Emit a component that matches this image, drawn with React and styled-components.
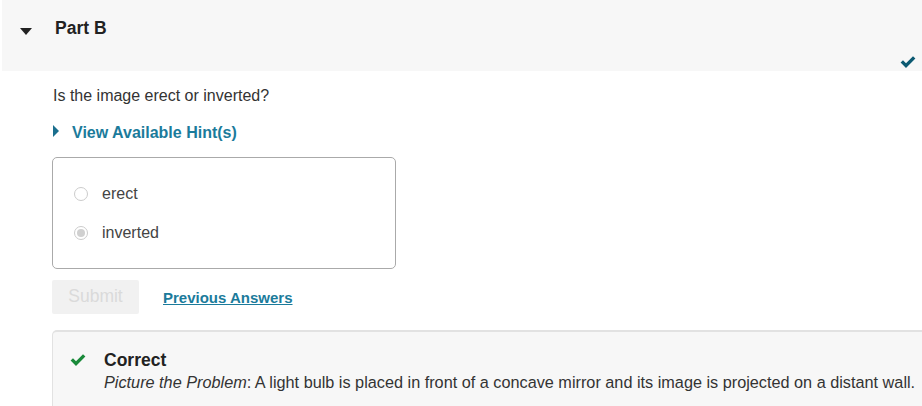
import React from "react";
import styled, { createGlobalStyle } from "styled-components";

const GlobalStyle = createGlobalStyle`
  html, body {
    margin: 0;
    padding: 0;
    background: #fff;
    font-family: "Liberation Sans", Arial, sans-serif;
    overflow: hidden;
  }
`;

const Page = styled.div`
  width: 922px;
  height: 406px;
  overflow: hidden;
`;

const Header = styled.div`
  position: relative;
  margin-left: 2px;
  height: 71px;
  background: #f7f7f7;
  display: flex;
  align-items: flex-start;
  padding-top: 18px;
  box-sizing: border-box;
`;

const Caret = styled.span`
  width: 0;
  height: 0;
  margin: 10px 0 0 18px;
  border-left: 6px solid transparent;
  border-right: 6px solid transparent;
  border-top: 7px solid #222;
`;

const PartTitle = styled.h2`
  margin: 0 0 0 23px;
  font-size: 17.5px;
  font-weight: bold;
  color: #222;
  line-height: 20px;
`;

const CheckIcon = styled.svg`
  flex: none;
  display: block;
`;

const DoneCheck = styled(CheckIcon)`
  position: absolute;
  right: 6px;
  bottom: 2px;
`;

const Body = styled.div`
  padding-left: 53px;
  display: flex;
  flex-direction: column;
`;

const Question = styled.p`
  margin: 16px 0 0;
  font-size: 16px;
  line-height: 18px;
  color: #333;
`;

const HintToggle = styled.a`
  display: flex;
  align-items: center;
  margin-top: 19px;
  font-size: 16px;
  font-weight: bold;
  line-height: 18px;
  color: #1b7b9b;
  cursor: pointer;
`;

const HintArrow = styled.span`
  width: 0;
  height: 0;
  margin-top: -5px;
  margin-right: 13px;
  border-top: 6.5px solid transparent;
  border-bottom: 6.5px solid transparent;
  border-left: 6px solid #1b6f8e;
`;

const Choices = styled.div`
  margin: 15px 0 0 -1px;
  width: 344px;
  height: 112px;
  box-sizing: border-box;
  border: 1px solid #aaa;
  border-radius: 5px;
  display: flex;
  flex-direction: column;
  padding: 27px 0 0 21px;
  gap: 21px;
`;

const Choice = styled.label`
  display: flex;
  align-items: center;
  font-size: 16px;
  line-height: 18px;
  color: #444;
`;

const Radio = styled.span`
  width: 14px;
  height: 14px;
  box-sizing: border-box;
  border-radius: 50%;
  border: 1px solid #ccc;
  background: #fff;
  margin-right: 14px;
  display: flex;
  align-items: center;
  justify-content: center;
  &::after {
    content: "";
    display: ${(p) => (p.checked ? "block" : "none")};
    width: 8px;
    height: 8px;
    border-radius: 50%;
    background: #d0d0d0;
  }
`;

const Actions = styled.div`
  display: flex;
  align-items: center;
  margin: 11px 0 0 -1px;
  gap: 24px;
`;

const SubmitButton = styled.button`
  width: 87px;
  height: 34px;
  border: none;
  border-radius: 2px;
  background: #f1f1f1;
  color: #dadada;
  font-family: inherit;
  font-size: 17.5px;
  padding: 0 0 2px;
`;

const PrevLink = styled.a`
  font-size: 15px;
  font-weight: bold;
  color: #1b7b9b;
  text-decoration: underline;
  margin-top: 1px;
`;

const Feedback = styled.div`
  margin: 16px 0 0 -1px;
  height: 90px;
  box-sizing: border-box;
  background: #f7f7f7;
  border-top: 2px solid #e2e2e2;
  border-left: 1px solid #e2e2e2;
  border-top-left-radius: 5px;
  display: flex;
  padding: 18px 0 0 17px;
`;

const FeedbackIconWrap = styled.div`
  margin: 4px 18px 0 0;
`;

const FeedbackText = styled.div`
  display: flex;
  flex-direction: column;
`;

const FeedbackTitle = styled.div`
  font-size: 17.5px;
  font-weight: bold;
  color: #222;
  line-height: 20px;
`;

const FeedbackLine = styled.div`
  font-size: 16.25px;
  color: #333;
  line-height: 20px;
  margin-top: 2px;
  white-space: nowrap;
  em {
    font-style: italic;
  }
`;

const Check = ({ color, as: Comp = CheckIcon }) => (
  <Comp width="16" height="13" viewBox="0 0 16 13">
    <path
      d="M0.6 6.6 L3 4.2 L6 7.2 L13 0.2 L15.4 2.6 L6 12 Z"
      fill={color}
    />
  </Comp>
);

export default function App() {
  return (
    <Page>
      <GlobalStyle />
      <Header>
        <Caret />
        <PartTitle>Part B</PartTitle>
        <Check as={DoneCheck} color="#0c5a72" />
      </Header>
      <Body>
        <Question>Is the image erect or inverted?</Question>
        <HintToggle>
          <HintArrow />
          View Available Hint(s)
        </HintToggle>
        <Choices>
          <Choice>
            <Radio />
            erect
          </Choice>
          <Choice>
            <Radio checked />
            inverted
          </Choice>
        </Choices>
        <Actions>
          <SubmitButton disabled>Submit</SubmitButton>
          <PrevLink>Previous Answers</PrevLink>
        </Actions>
        <Feedback>
          <FeedbackIconWrap>
            <Check color="#1a8a3a" />
          </FeedbackIconWrap>
          <FeedbackText>
            <FeedbackTitle>Correct</FeedbackTitle>
            <FeedbackLine>
              <em>Picture the Problem</em>: A light bulb is placed in front of a concave mirror and its image is projected on a distant wall.
            </FeedbackLine>
          </FeedbackText>
        </Feedback>
      </Body>
    </Page>
  );
}
